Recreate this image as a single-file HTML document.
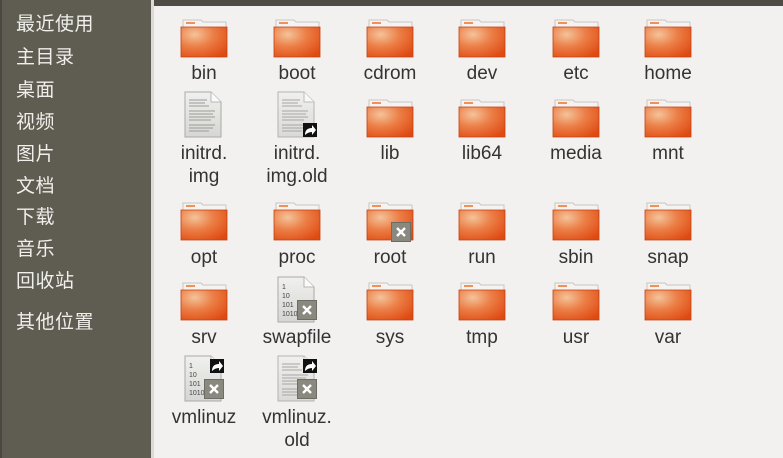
<!DOCTYPE html>
<html><head><meta charset="utf-8"><style>
body{margin:0;width:783px;height:458px;overflow:hidden;background:#f2f1f0;position:relative;font-family:"Liberation Sans","Noto Sans CJK SC",sans-serif}
#side{position:absolute;left:0;top:0;width:151px;height:458px;background:#5f5c51;border-left:2px solid #4a4840;box-sizing:border-box}
#bord{position:absolute;left:151px;top:0;width:3px;height:458px;background:#dcdad6}
#top{position:absolute;left:154px;top:0;width:629px;height:6px;background:#4f4c45}
.s{position:absolute;left:14px;color:#f0efec;font-size:19px;line-height:22px;letter-spacing:0.5px}
.i{position:absolute;width:48px;height:48px}
.l{position:absolute;width:92px;text-align:center;color:#333;font-size:19px;line-height:23px}
</style></head><body>
<svg width="0" height="0" style="position:absolute">
<defs>
<radialGradient id="g" cx="0.3" cy="0.25" r="0.9"><stop offset="0" stop-color="#f4c39a"/><stop offset="0.45" stop-color="#ec7f47"/><stop offset="1" stop-color="#de4a12"/></radialGradient>
<linearGradient id="dg" x1="0" y1="0" x2="0" y2="1"><stop offset="0" stop-color="#f0f0ee"/><stop offset="1" stop-color="#d6d6d3"/></linearGradient>
<symbol id="f" viewBox="0 0 48 48"><path d="M3 8h18l2 2h23v10H3z" fill="#f4f3f1" stroke="#c8c6c2" stroke-width="1"/><rect x="6" y="10" width="9" height="2" fill="#f0915a"/><path d="M1 15h46v30H1z" fill="url(#g)" stroke="#c24010" stroke-width="0.8"/></symbol>
<symbol id="d" viewBox="0 0 48 48"><path d="M6 2h26l10 10v35H6z" fill="url(#dg)" stroke="#a9a9a6"/><path d="M32 2v10h10" fill="#fafafa" stroke="#b5b5b2"/><g stroke="#9a9a97" stroke-width="1"><path d="M10 10h18M10 13h16M10 16h20M10 21h26M10 24h24M10 27h26M10 30h22M10 35h26M10 38h24M10 41h20"/></g></symbol>
<symbol id="b" viewBox="0 0 48 48"><path d="M6 2h26l10 10v35H6z" fill="url(#dg)" stroke="#a9a9a6"/><path d="M32 2v10h10" fill="#fafafa" stroke="#b5b5b2"/><text x="10" y="14" font-size="7" fill="#444" font-family="Liberation Sans">1</text><text x="10" y="23" font-size="7" fill="#444" font-family="Liberation Sans">10</text><text x="10" y="32" font-size="7" fill="#444" font-family="Liberation Sans">101</text><text x="10" y="41" font-size="7" fill="#444" font-family="Liberation Sans">1010</text></symbol>
<symbol id="x" viewBox="0 0 20 20"><rect x="0.5" y="0.5" width="19" height="19" fill="#8a8980" stroke="#6d6c65"/><path d="M6 6l8 8M14 6l-8 8" stroke="#fff" stroke-width="2.4"/></symbol>
<symbol id="a" viewBox="0 0 14 14"><rect width="14" height="14" fill="#111"/><path d="M2 12q0-7 7-7v-3l4 5-4 5v-3q-4 0-7 3z" fill="#fff"/></symbol>
</defs></svg>
<div id="side">
<div class="s" style="top:14px">最近使用</div>
<div class="s" style="top:47px">主目录</div>
<div class="s" style="top:80px">桌面</div>
<div class="s" style="top:112px">视频</div>
<div class="s" style="top:144px">图片</div>
<div class="s" style="top:176px">文档</div>
<div class="s" style="top:207px">下载</div>
<div class="s" style="top:239px">音乐</div>
<div class="s" style="top:271px">回收站</div>
<div class="s" style="top:312px">其他位置</div>
</div>
<div id="bord"></div><div id="top"></div>

<svg class="i" style="left:180px;top:12px"><use href="#f"/></svg>
<svg class="i" style="left:273px;top:12px"><use href="#f"/></svg>
<svg class="i" style="left:366px;top:12px"><use href="#f"/></svg>
<svg class="i" style="left:458px;top:12px"><use href="#f"/></svg>
<svg class="i" style="left:552px;top:12px"><use href="#f"/></svg>
<svg class="i" style="left:644px;top:12px"><use href="#f"/></svg>
<div class="l" style="left:158px;top:62px">bin</div>
<div class="l" style="left:251px;top:62px">boot</div>
<div class="l" style="left:344px;top:62px">cdrom</div>
<div class="l" style="left:436px;top:62px">dev</div>
<div class="l" style="left:530px;top:62px">etc</div>
<div class="l" style="left:622px;top:62px">home</div>

<svg class="i" style="left:179px;top:90px"><use href="#d"/></svg>
<svg class="i" style="left:272px;top:90px"><use href="#d" opacity="0.85"/><svg x="31" y="33" width="14" height="14"><use href="#a"/></svg></svg>
<svg class="i" style="left:366px;top:92px"><use href="#f"/></svg>
<svg class="i" style="left:458px;top:92px"><use href="#f"/></svg>
<svg class="i" style="left:552px;top:92px"><use href="#f"/></svg>
<svg class="i" style="left:644px;top:92px"><use href="#f"/></svg>
<div class="l" style="left:158px;top:142px">initrd.<br>img</div>
<div class="l" style="left:251px;top:142px">initrd.<br>img.old</div>
<div class="l" style="left:344px;top:142px">lib</div>
<div class="l" style="left:436px;top:142px">lib64</div>
<div class="l" style="left:530px;top:142px">media</div>
<div class="l" style="left:622px;top:142px">mnt</div>

<svg class="i" style="left:180px;top:195px"><use href="#f"/></svg>
<svg class="i" style="left:273px;top:195px"><use href="#f"/></svg>
<svg class="i" style="left:366px;top:195px"><use href="#f"/><svg x="25" y="27" width="20" height="20"><use href="#x"/></svg></svg>
<svg class="i" style="left:458px;top:195px"><use href="#f"/></svg>
<svg class="i" style="left:552px;top:195px"><use href="#f"/></svg>
<svg class="i" style="left:644px;top:195px"><use href="#f"/></svg>
<div class="l" style="left:158px;top:246px">opt</div>
<div class="l" style="left:251px;top:246px">proc</div>
<div class="l" style="left:344px;top:246px">root</div>
<div class="l" style="left:436px;top:246px">run</div>
<div class="l" style="left:530px;top:246px">sbin</div>
<div class="l" style="left:622px;top:246px">snap</div>

<svg class="i" style="left:180px;top:275px"><use href="#f"/></svg>
<svg class="i" style="left:272px;top:275px"><use href="#b"/><svg x="25" y="25" width="20" height="20"><use href="#x"/></svg></svg>
<svg class="i" style="left:366px;top:275px"><use href="#f"/></svg>
<svg class="i" style="left:458px;top:275px"><use href="#f"/></svg>
<svg class="i" style="left:552px;top:275px"><use href="#f"/></svg>
<svg class="i" style="left:644px;top:275px"><use href="#f"/></svg>
<div class="l" style="left:158px;top:326px">srv</div>
<div class="l" style="left:251px;top:326px">swapfile</div>
<div class="l" style="left:344px;top:326px">sys</div>
<div class="l" style="left:436px;top:326px">tmp</div>
<div class="l" style="left:530px;top:326px">usr</div>
<div class="l" style="left:622px;top:326px">var</div>

<svg class="i" style="left:179px;top:354px"><use href="#b"/><svg x="31" y="5" width="14" height="14"><use href="#a"/></svg><svg x="25" y="25" width="20" height="20"><use href="#x"/></svg></svg>
<svg class="i" style="left:272px;top:354px"><use href="#d" opacity="0.85"/><svg x="31" y="5" width="14" height="14"><use href="#a"/></svg><svg x="25" y="25" width="20" height="20"><use href="#x"/></svg></svg>
<div class="l" style="left:158px;top:406px">vmlinuz</div>
<div class="l" style="left:251px;top:406px">vmlinuz.<br>old</div>
</body></html>
